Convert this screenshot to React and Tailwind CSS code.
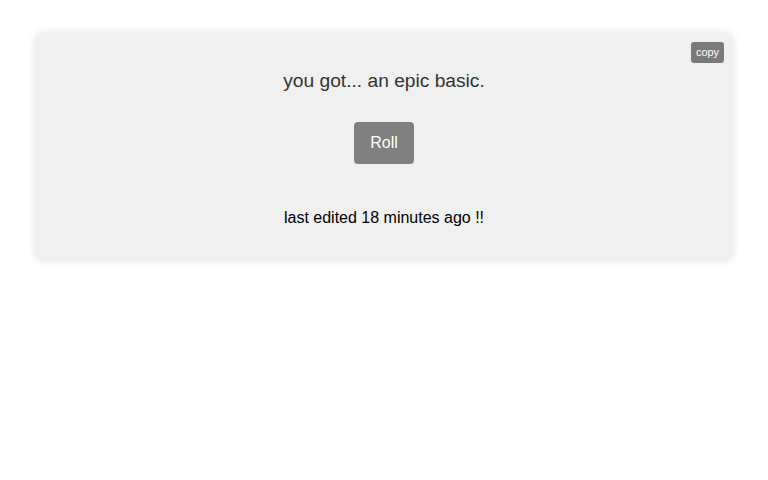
import React from "react";

export default function App() {
    return (
        <div className="min-h-[480px] bg-white pt-[33px] px-[35px]" style={{ fontFamily: '"Liberation Sans", Arial, sans-serif' }}>
            <div className="relative rounded-lg bg-[#f0f0f0] shadow-[0_0_8px_rgba(0,0,0,0.12)] pt-[37px] pb-[33px] flex flex-col items-center">
                <button className="absolute top-[9px] right-[9px] w-[33px] h-[21px] rounded-[3px] bg-[#7a7a7a] text-white text-[11px] leading-none">
                    copy
                </button>
                <div className="text-[19.2px] leading-[22px] text-[#333333]">you got... an epic basic.</div>
                <button className="mt-[30px] w-[60px] h-[42px] shrink-0 rounded-[4px] bg-[#808080] text-white text-[16px]">
                    Roll
                </button>
                <div className="mt-[45px] text-[16px] leading-[18px] text-black">last edited 18 minutes ago !!</div>
            </div>
        </div>
    );
}
